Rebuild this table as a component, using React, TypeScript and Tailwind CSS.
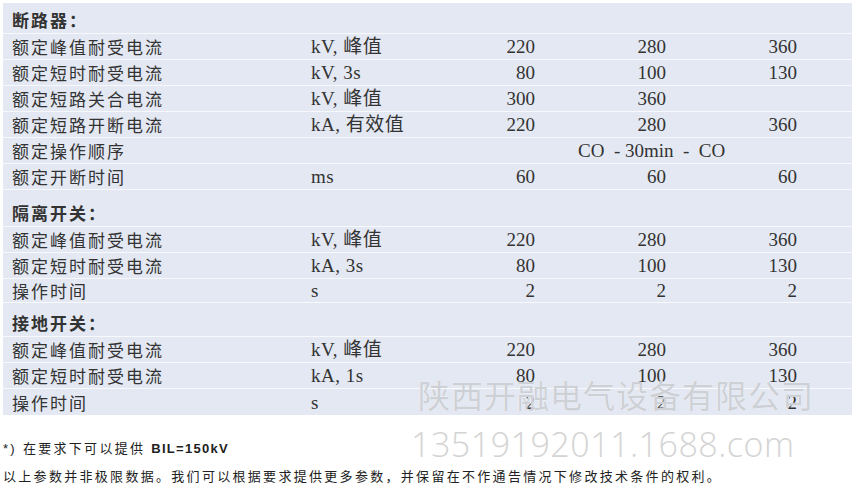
import React from "react";

type Row = { label: string; unit?: string; v?: [string, string, string]; span?: string };

const sections: { title: string; h: string; rows: Row[]; hs: string[] }[] = [
  {
    title: "断路器：",
    h: "h-[31px]",
    hs: ["h-[26px]", "h-[26px]", "h-[26px]", "h-[26px]", "h-[26px]", "h-[26px]"],
    rows: [
      { label: "额定峰值耐受电流", unit: "kV, 峰值", v: ["220", "280", "360"] },
      { label: "额定短时耐受电流", unit: "kV, 3s", v: ["80", "100", "130"] },
      { label: "额定短路关合电流", unit: "kV, 峰值", v: ["300", "360", ""] },
      { label: "额定短路开断电流", unit: "kA, 有效值", v: ["220", "280", "360"] },
      { label: "额定操作顺序", span: "CO\u00a0\u00a0-\u00a030min\u00a0\u00a0-\u00a0\u00a0CO" },
      { label: "额定开断时间", unit: "ms", v: ["60", "60", "60"] },
    ],
  },
  {
    title: "隔离开关：",
    h: "h-[37px]",
    hs: ["h-[26px]", "h-[26px]", "h-[24px]"],
    rows: [
      { label: "额定峰值耐受电流", unit: "kV, 峰值", v: ["220", "280", "360"] },
      { label: "额定短时耐受电流", unit: "kA, 3s", v: ["80", "100", "130"] },
      { label: "操作时间", unit: "s", v: ["2", "2", "2"] },
    ],
  },
  {
    title: "接地开关：",
    h: "h-[34px]",
    hs: ["h-[26px]", "h-[26px]", "h-[26px]"],
    rows: [
      { label: "额定峰值耐受电流", unit: "kV, 峰值", v: ["220", "280", "360"] },
      { label: "额定短时耐受电流", unit: "kA, 1s", v: ["80", "100", "130"] },
      { label: "操作时间", unit: "s", v: ["2", "2", "2"] },
    ],
  },
];

const grid = "grid grid-cols-[9px_299px_160px_64px_131px_131px_1fr] items-center border-b border-[#f7f9fc]";
const cjk = "font-['Noto_Sans_CJK_SC',sans-serif] text-[17px] tracking-[2px] text-[#333]";
const serif = "font-['Liberation_Serif','Noto_Sans_CJK_SC',serif] text-[19px] text-[#333] leading-none";

export default function App() {
  return (
    <div className="relative w-[855px] h-[493px] bg-white overflow-hidden">
      <div className="pt-[3px] pl-[3px] w-[852px]">
        <div className="bg-[#e3e8f2]">
          {sections.map((s, si) => (
            <div key={si}>
              <div className={`${grid} ${s.h} !items-end pb-[2px]`}>
                <div />
                <div className={`${cjk} font-bold leading-[22px] col-span-2`}>{s.title}</div>
              </div>
              {s.rows.map((r, ri) => {
                const last = si === 2 && ri === s.rows.length - 1;
                return (
                  <div key={ri} className={`${grid} ${s.hs[ri]} ${last ? "!border-b-0" : ""}`}>
                    <div />
                    <div className={`${cjk} leading-none`}>{r.label}</div>
                    <div className={`${serif} tracking-[0.5px]`}>{r.unit ?? ""}</div>
                    {r.span ? (
                      <div className={`${serif} col-span-3 pl-[107px] whitespace-nowrap`}>{r.span}</div>
                    ) : (
                      <>
                        <div className={`${serif} text-right`}>{r.v?.[0]}</div>
                        <div className={`${serif} text-right`}>{r.v?.[1]}</div>
                        <div className={`${serif} text-right`}>{r.v?.[2]}</div>
                      </>
                    )}
                    <div />
                  </div>
                );
              })}
            </div>
          ))}
        </div>
      </div>

      <div className="mt-[24px] pl-[3px] flex flex-col gap-[8px] font-['Liberation_Sans','Noto_Sans_CJK_SC',sans-serif] text-[13px] tracking-[2.3px] text-[#222] leading-[20px]">
        <div>
          *) 在要求下可以提供 <span className="font-bold tracking-[1.3px]">BIL=150kV</span>
        </div>
        <div>以上参数并非极限数据。我们可以根据要求提供更多参数，并保留在不作通告情况下修改技术条件的权利。</div>
      </div>

      <div className="absolute left-[418px] top-[378px] whitespace-nowrap font-['Noto_Sans_CJK_SC',sans-serif] text-[32px] leading-none tracking-[1px] text-[#cdd0d5] [text-shadow:0_0_1px_#ffffff]">
        陕西开融电气设备有限公司
      </div>
      <div className="absolute left-[411px] top-[427px] whitespace-nowrap font-['Open_Sans',sans-serif] font-light text-[34px] leading-none tracking-[0.5px] text-[#d4d4d4]">
        13519192011.1688.com
      </div>
    </div>
  );
}
